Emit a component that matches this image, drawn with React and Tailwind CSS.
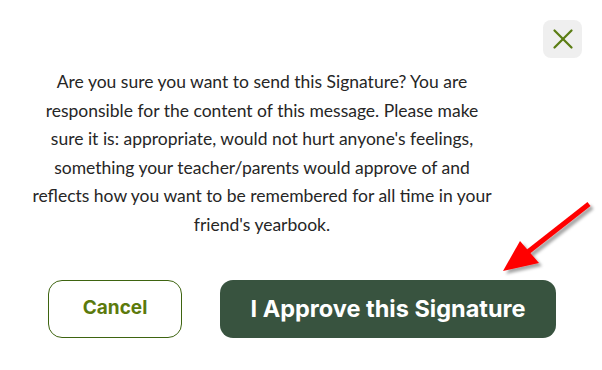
import { X } from 'lucide-react';

const lines = [
  'Are you sure you want to send this Signature? You are',
  'responsible for the content of this message. Please make',
  "sure it is: appropriate, would not hurt anyone's feelings,",
  'something your teacher/parents would approve of and',
  'reflects how you want to be remembered for all time in your',
  "friend's yearbook.",
];

function Arrow() {
  return (
    <svg
      className="absolute left-0 top-0 pointer-events-none"
      width="602"
      height="370"
      viewBox="0 0 602 370"
    >
      <defs>
        <filter id="shadow" x="-20%" y="-20%" width="140%" height="140%">
          <feDropShadow dx="3" dy="3" stdDeviation="1.5" floodColor="#000" floodOpacity="0.35" />
        </filter>
      </defs>
      <g filter="url(#shadow)">
        <line x1="589" y1="204" x2="524" y2="255" stroke="#ff0000" strokeWidth="5" />
        <polygon points="503,271 520,241 539,263" fill="#ff0000" />
      </g>
    </svg>
  );
}

export default function App() {
  return (
    <div
      className="relative w-[602px] h-[370px] bg-white overflow-hidden"
      style={{ fontFamily: 'Inter, "Noto Sans", sans-serif' }}
    >
      <button className="absolute left-[543px] top-[20px] w-[39px] h-[38px] rounded-lg bg-[#efefef] flex items-center justify-center">
        <X size={34} strokeWidth={1.6} className="text-[#5b7d14]" />
      </button>

      <div className="pt-[68px] flex flex-col">
        <p
          className="ml-[22px] w-[480px] text-center text-[17.5px] leading-[28.6px] text-[#262626]"
          style={{ fontFamily: 'Lato, sans-serif' }}
        >
          {lines.map((l, i) => (
            <span key={i} className="block whitespace-nowrap">
              {l}
            </span>
          ))}
        </p>

        <div className="mt-[40px] pl-[48px] flex gap-[38px]">
          <button className="w-[134px] h-[58px] rounded-[14px] border border-[#3e6410] text-[#5b7a0c] text-[19px] font-bold">
            Cancel
          </button>
          <button className="w-[336px] h-[58px] rounded-[13px] bg-[#38533f] text-white text-[23.5px] font-bold">
            I Approve this Signature
          </button>
        </div>
      </div>

      <Arrow />
    </div>
  );
}
